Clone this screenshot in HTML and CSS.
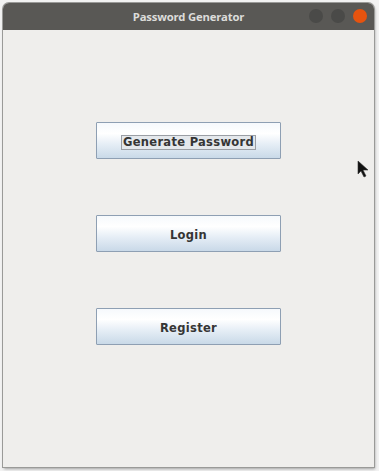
FILE: index.html
```html
<!DOCTYPE html>
<html>
<head>
<meta charset="utf-8">
<link rel="stylesheet" href="styles.css">
</head>
<body>
<div class="desktop">
  <div class="window">
    <div class="titlebar">
      <span class="title">Password Generator</span>
      <div class="controls">
        <span class="dot"></span>
        <span class="dot"></span>
        <span class="dot close"></span>
      </div>
    </div>
    <div class="content">
      <button class="btn"><span class="focus">Generate Password</span></button>
      <button class="btn">Login</button>
      <button class="btn">Register</button>
    </div>
  </div>
  <svg class="cursor" width="12" height="18" viewBox="0 0 12 18"><path d="M1 1 L1 14 L4 11 L7 17 L9 16 L6 10 L11 10 Z" fill="#111" stroke="#333" stroke-width="0.6"/></svg>
</div>
</body>
</html>
```

FILE: styles.css
```css
html, body {
  margin: 0;
  padding: 0;
}
body {
  width: 379px;
  height: 471px;
  overflow: hidden;
  background: #f2f2f2;
  font-family: "DejaVu Sans", sans-serif;
}
.desktop {
  position: relative;
  width: 379px;
  height: 471px;
  padding: 3px 5px 4px 3px;
  box-sizing: border-box;
}
.window {
  height: 100%;
  display: flex;
  flex-direction: column;
  background: #efeeec;
  border-radius: 6px 6px 0 0;
  box-shadow: 0 0 0 1px #9a9a98, 1px 2px 3px rgba(0,0,0,0.35);
  overflow: hidden;
}
.titlebar {
  height: 27px;
  flex: none;
  background: #595855;
  display: flex;
  align-items: center;
  justify-content: center;
  position: relative;
}
.title {
  color: #dcdcda;
  font-size: 11.3px;
  font-weight: bold;
  font-family: "Open Sans", "DejaVu Sans", sans-serif;
  letter-spacing: -0.2px;
}
.controls {
  position: absolute;
  right: 7px;
  top: 6px;
  display: flex;
  gap: 8px;
}
.dot {
  width: 14px;
  height: 14px;
  border-radius: 50%;
  background: #4a4a48;
}
.dot.close {
  background: #e6530f;
}
.content {
  flex: 1;
  display: flex;
  flex-direction: column;
  align-items: center;
  padding-top: 92px;
  gap: 56px;
}
.btn {
  width: 185px;
  height: 37px;
  border: 1px solid #8e9fb3;
  border-radius: 1px;
  background: linear-gradient(to bottom, #f6f9fc 0%, #ffffff 30%, #e6eef6 60%, #c9d9e8 100%);
  font-family: "DejaVu Sans", sans-serif;
  font-weight: bold;
  font-size: 11.5px;
  letter-spacing: 0.3px;
  color: #353535;
  padding: 3px 0 0;
  display: flex;
  align-items: center;
  justify-content: center;
}
.focus {
  border: 1px solid #9a9ea4;
  background: #e4e8ec;
  padding: 0 1px;
  line-height: 13px;
}
.cursor {
  position: absolute;
  left: 357px;
  top: 160px;
}
```
